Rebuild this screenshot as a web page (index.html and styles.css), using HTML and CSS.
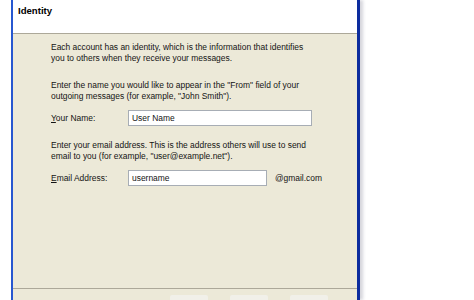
FILE: index.html
```html
<!DOCTYPE html>
<html>
<head>
<meta charset="utf-8">
<link rel="stylesheet" href="styles.css">
</head>
<body>
<div class="window">
  <div class="header">
    <div class="title">Identity</div>
  </div>
  <div class="content">
    <p class="para first">Each account has an identity, which is the information that identifies<br>you to others when they receive your messages.</p>
    <p class="para">Enter the name you would like to appear in the "From" field of your<br>outgoing messages (for example, "John Smith").</p>
    <div class="row">
      <span class="label"><u>Y</u>our Name:</span>
      <span class="input name">User Name</span>
    </div>
    <p class="para p3">Enter your email address. This is the address others will use to send<br>email to you (for example, "user@example.net").</p>
    <div class="row">
      <span class="label"><u>E</u>mail Address:</span>
      <span class="input email">username</span>
      <span class="suffix">@gmail.com</span>
    </div>
  </div>
  <div class="footer">
    <span class="btn b1"></span>
    <span class="btn b2"></span>
    <span class="btn b3"></span>
  </div>
</div>
</body>
</html>
```

FILE: styles.css
```css
html, body {
  margin: 0;
  padding: 0;
  background: #ffffff;
  overflow: hidden;
}
body {
  width: 474px;
  height: 300px;
  font-family: "Liberation Sans", Arial, sans-serif;
  font-size: 8.45px;
  color: #141414;
}
.window {
  margin-left: 11px;
  width: 344px;
  height: 300px;
  border-left: 2px solid #2757d0;
  border-right: 3px solid #0c2c9e;
  box-shadow: 3px 0 3px rgba(120, 120, 140, 0.3);
  display: flex;
  flex-direction: column;
  overflow: hidden;
}
.header {
  flex: none;
  height: 34px;
  box-sizing: border-box;
  background: #ffffff;
  border-bottom: 1px solid #aca899;
  padding-left: 5px;
  padding-top: 5px;
}
.title {
  font-weight: bold;
  font-size: 9.6px;
  line-height: 12px;
  color: #000;
}
.content {
  flex: none;
  background: #ece9d8;
  height: 254px;
  box-sizing: border-box;
  padding-top: 8px;
  padding-left: 38px;
}
.para {
  margin: 16px 0 0 0;
  line-height: 11px;
  white-space: nowrap;
}
.para.first { margin-top: 0; }
.para.p3 { margin-top: 14px; }
.row {
  margin-top: 8px;
  display: flex;
  align-items: center;
  height: 16px;
}
.label {
  width: 77px;
  flex: none;
}
.input {
  box-sizing: border-box;
  height: 16px;
  line-height: 14px;
  background: #ffffff;
  border: 1px solid #a7adb5;
  padding-left: 3px;
  flex: none;
}
.input.name { width: 184px; }
.input.email { width: 139px; }
.suffix { margin-left: 8px; }
.footer {
  flex: 1;
  min-height: 0;
  background: #ece9d8;
  border-top: 1px solid #aca899;
  display: flex;
  align-items: flex-start;
  padding-top: 6px;
  padding-left: 157px;
  gap: 22px;
  overflow: hidden;
}
.btn {
  flex: none;
  width: 38px;
  height: 5px;
  background: #f1f0e9;
  border-radius: 2px 2px 0 0;
}
```
